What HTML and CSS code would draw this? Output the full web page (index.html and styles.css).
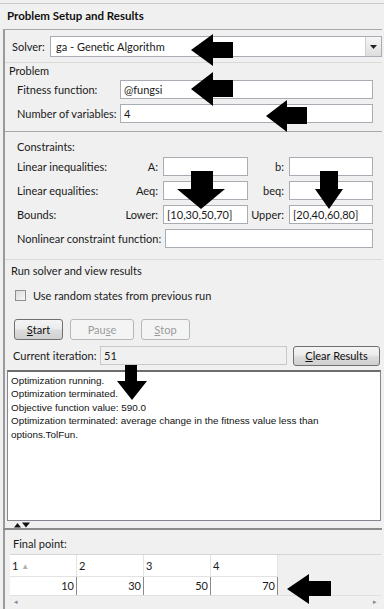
FILE: index.html
```html
<!DOCTYPE html>
<html>
<head>
<meta charset="utf-8">
<link rel="stylesheet" href="styles.css">
</head>
<body>
<div class="page">
  <div class="title">Problem Setup and Results</div>
  <div class="panel">
    <div class="row solver-row">
      <span class="lbl solver-lbl">Solver:</span>
      <div class="select">
        <span>ga - Genetic Algorithm</span>
        <span class="drop"><svg width="9" height="6" viewBox="0 0 9 6"><path d="M1 1h7L4.5 5z" fill="#222"/></svg></span>
      </div>
    </div>
    <div class="group problem">
      <div class="gtitle">Problem</div>
      <div class="row r1">
        <span class="lbl w103">Fitness function:</span>
        <div class="input wide">@fungsi</div>
      </div>
      <div class="row r2">
        <span class="lbl w103">Number of variables:</span>
        <div class="input wide">4</div>
      </div>
    </div>
    <div class="group constraints">
      <div class="ctitle">Constraints:</div>
      <div class="row crow">
        <span class="lbl c1">Linear inequalities:</span>
        <span class="lbl c2">A:</span>
        <div class="input ci"></div>
        <span class="lbl c3">b:</span>
        <div class="input ci2"></div>
      </div>
      <div class="row crow">
        <span class="lbl c1">Linear equalities:</span>
        <span class="lbl c2">Aeq:</span>
        <div class="input ci"></div>
        <span class="lbl c3">beq:</span>
        <div class="input ci2"></div>
      </div>
      <div class="row crow">
        <span class="lbl c1">Bounds:</span>
        <span class="lbl c2">Lower:</span>
        <div class="input ci">[10,30,50,70]</div>
        <span class="lbl c3">Upper:</span>
        <div class="input ci2">[20,40,60,80]</div>
      </div>
      <div class="row crow">
        <span class="lbl nl">Nonlinear constraint function:</span>
        <div class="input nli"></div>
      </div>
    </div>
    <div class="group run">
      <div class="rtitle">Run solver and view results</div>
      <div class="row chk-row">
        <span class="chk"></span>
        <span class="lbl">Use random states from previous run</span>
      </div>
      <div class="row btn-row">
        <div class="btn start"><u>S</u>tart</div>
        <div class="btn dis pause">Pau<u>s</u>e</div>
        <div class="btn dis stop"><u>S</u>top</div>
      </div>
      <div class="row iter-row">
        <span class="lbl itl">Current iteration:</span>
        <div class="input iti">51</div>
        <div class="btn clear"><u>C</u>lear Results</div>
      </div>
      <div class="output">
        <div>Optimization running.</div>
        <div>Optimization terminated.</div>
        <div>Objective function value: 590.0</div>
        <div>Optimization terminated: average change in the fitness value less than</div>
        <div>options.TolFun.</div>
      </div>
      <div class="splitter">
        <svg width="18" height="6" viewBox="0 0 18 6"><path d="M1 5.5L4.5 1L8 5.5z" fill="#111"/><path d="M9 0.5h8L13 5.5z" fill="#111"/></svg>
      </div>
    </div>
    <div class="final">
      <div class="ftitle">Final point:</div>
      <div class="table">
        <div class="thead">
          <div class="th">1 <span class="sort">▲</span></div>
          <div class="th">2</div>
          <div class="th">3</div>
          <div class="th">4</div>
          <div class="th empty"></div>
        </div>
        <div class="tbody">
          <div class="td">10</div>
          <div class="td">30</div>
          <div class="td">50</div>
          <div class="td">70</div>
          <div class="td empty"></div>
        </div>
        <div class="hscroll"><span>◂</span><span>▸</span></div>
      </div>
    </div>
  </div>

  <svg class="arrow a-solver" width="42" height="32" viewBox="0 0 42 32"><path d="M0 16L22 0V8H42V24H22V32z" fill="#000"/></svg>
  <svg class="arrow a-fit" width="42" height="34" viewBox="0 0 42 34"><path d="M0 17L22 0V8H42V25H22V34z" fill="#000"/></svg>
  <svg class="arrow a-var" width="41" height="32" viewBox="0 0 41 32"><path d="M0 16L21 0V7H41V24H21V32z" fill="#000"/></svg>
  <svg class="arrow a-low" width="48" height="38" viewBox="0 0 48 38"><path d="M14 0H36V18H48L24 38L0 18H14z" fill="#000"/></svg>
  <svg class="arrow a-up" width="28" height="38" viewBox="0 0 28 38"><path d="M5 0H23V18H28L14 38L0 18H5z" fill="#000"/></svg>
  <svg class="arrow a-out" width="30" height="35" viewBox="0 0 30 35"><path d="M8 0H20V16H30L15 35L0 16H8z" fill="#000"/></svg>
  <svg class="arrow a-fin" width="44" height="30" viewBox="0 0 44 30"><path d="M0 15L22 0V7H44V22H22V30z" fill="#000"/></svg>
</div>
</body>
</html>
```

FILE: styles.css
```css
* { box-sizing: border-box; }
html, body { margin: 0; padding: 0; }
body {
  width: 384px;
  height: 609px;
  overflow: hidden;
  background: #f0f0f0;
  font-family: Lato, "Noto Sans", sans-serif;
  font-size: 11px;
  color: #1a1a1a;
}
.page { position: relative; width: 384px; height: 609px; }
.title {
  margin: 3px 0 0 0;
  border-top: 1px solid #c8c8c8;
  height: 26px;
  line-height: 24px;
  padding-left: 7px;
  font-weight: bold;
  font-size: 11.5px;
  color: #111;
}
.panel {
  margin-left: 3px;
  margin-right: 2px;
  border-left: 2px solid #9a9a9a;
  border-top: 1px solid #a8a8a8;
  background: #f0f0f0;
  height: 580px;
}
.row { display: flex; align-items: center; }
.lbl { white-space: nowrap; flex-shrink: 0; }
.input {
  flex-shrink: 0;
  background: #fff;
  border: 1px solid #a9adb3;
  height: 19px;
  line-height: 17px;
  padding-left: 3px;
  white-space: nowrap;
}
.solver-row { margin-top: 6px; height: 21px; padding-left: 7px; }
.solver-lbl { width: 38px; }
.select {
  width: 332px;
  height: 21px;
  background: #fff;
  border: 1px solid #a9adb3;
  display: flex;
  align-items: center;
  justify-content: space-between;
  padding-left: 5px;
}
.drop {
  width: 16px; height: 19px;
  display: flex; align-items: center; justify-content: center;
  background: linear-gradient(#f6f6f6, #dedede);
  border-left: 1px solid #d0d0d0;
}
.group.problem { margin-top: 5px; border-top: 1px solid #dadada; padding-bottom: 8px; border-bottom: 1px solid #a8a8a8; }
.gtitle { padding-left: 4px; height: 17px; line-height: 15px; }
.w103 { width: 115px; padding-left: 12px; }
.r1, .r2 { height: 19px; }
.r2 { margin-top: 5px; }
.input.wide { width: 253px; }
.constraints { border-bottom: 1px solid #dadada; padding-bottom: 6px; }
.ctitle { padding-left: 12px; height: 25px; line-height: 29px; }
.crow { height: 19px; margin-bottom: 5px; }
.c1 { width: 110px; padding-left: 12px; }
.c2 { width: 43px; text-align: right; }
.ci { margin-left: 5px; width: 85px; }
.c3 { width: 36px; text-align: right; }
.ci2 { margin-left: 5px; width: 84px; }
.nl { width: 160px; padding-left: 12px; }
.nli { width: 208px; }
.rtitle { padding-left: 6px; height: 20px; line-height: 20px; margin-top: 1px; }
.chk-row { margin-top: 6px; height: 16px; padding-left: 10px; }
.chk {
  width: 11px; height: 11px;
  border: 1px solid #8e8f8f;
  background: linear-gradient(135deg, #dcdcdc, #f6f6f6);
  margin-right: 7px;
}
.btn-row { margin-top: 16px; padding-left: 9px; gap: 7px; height: 21px; }
.btn {
  flex-shrink: 0;
  height: 21px;
  border: 1px solid #707070;
  border-radius: 3px;
  background: linear-gradient(#f4f4f4 0%, #ececec 45%, #dcdcdc 55%, #d0d0d0 100%);
  display: flex; align-items: center; justify-content: center;
  color: #111;
}
.btn.dis {
  border-color: #b5b8bb;
  background: #f4f4f4;
  color: #9b9b9b;
}
.start { width: 49px; }
.pause { width: 64px; }
.stop { width: 49px; }
.iter-row { margin-top: 5px; height: 21px; padding-left: 8px; }
.itl { width: 87px; }
.iti { width: 187px; height: 19px; border-color: #c8c8c8; background: #f0f0f0; }
.clear { margin-left: 6px; width: 87px; height: 20px; }
.output {
  margin-top: 4px;
  margin-left: 2px;
  width: 374px;
  height: 151px;
  background: #fff;
  border: 1px solid #828790;
  border-top: 2px solid #6d6d6d;
  padding: 2px 3px;
  font-family: "Liberation Sans", Arial, sans-serif;
  font-size: 9.9px;
  line-height: 13.4px;
  color: #111;
}
.splitter { height: 7px; padding-left: 8px; display: flex; align-items: center; }
.final { border-top: 2px solid #8c8c8c; margin-left: -2px; padding-left: 2px; }
.ftitle { padding-left: 8px; height: 24px; line-height: 28px; }
.table { margin-left: 5px; width: 371px; border-top: 1px solid #d5d5d5; }
.thead, .tbody { display: flex; }
.th {
  width: 67px; height: 22px; line-height: 22px;
  padding-left: 2px;
  background: #fff;
  border-right: 1px solid #e3e3e3;
  border-bottom: 1px solid #e3e3e3;
}
.sort { color: #b0b0b0; font-size: 8px; vertical-align: 1px; }
.th.empty, .td.empty { flex: 1; background: #f0f0f0; border: none; }
.td {
  width: 67px; height: 18px; line-height: 18px;
  background: #fff; text-align: right; padding-right: 2px;
  border-right: 1px solid #8a8a8a;
}
.hscroll {
  height: 12px;
  display: flex; justify-content: space-between; align-items: center;
  padding: 0 4px;
  font-size: 7px; color: #888;
  border-top: 1px solid #e0e0e0;
}
.arrow { position: absolute; }
.a-solver { left: 191px; top: 31px; }
.a-fit { left: 191px; top: 69px; }
.a-var { left: 266px; top: 97px; }
.a-low { left: 177px; top: 168px; }
.a-up { left: 315px; top: 168px; }
.a-out { left: 117px; top: 362px; }
.a-fin { left: 287px; top: 571px; }
```
